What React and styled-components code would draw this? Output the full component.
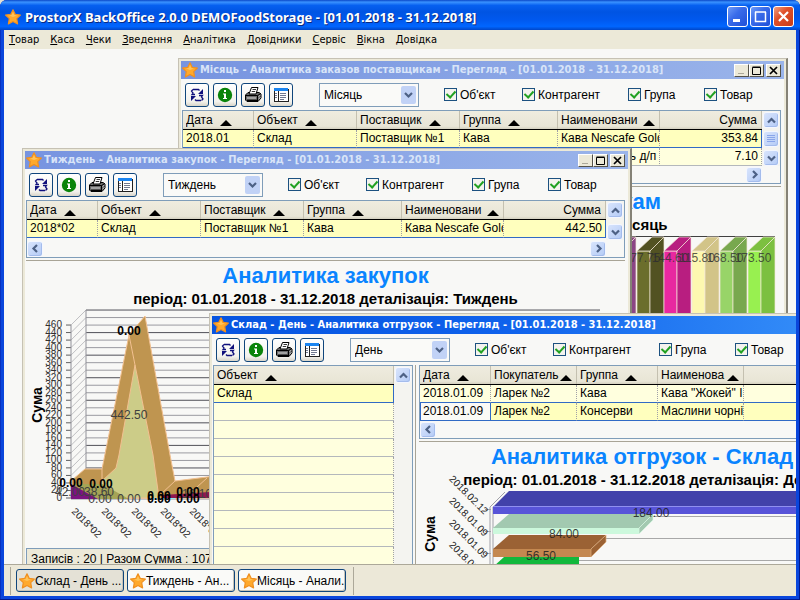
import React from "react";
import styled, { createGlobalStyle, css } from "styled-components";

const uiFont = `"Liberation Sans", Arial, sans-serif`;
const captionFont = `"DejaVu Sans Condensed", "DejaVu Sans", sans-serif`;

const GlobalStyle = createGlobalStyle`
  * {
    box-sizing: border-box;
  }
  body {
    margin: 0;
    background: #e4e0d4;
    color: #000000;
    font-family: ${uiFont};
    font-size: 12px;
  }
  button, select, input {
    font: inherit;
    color: inherit;
    margin: 0;
    padding: 0;
  }
`;

/* ---------- main window ---------- */

const AppFrame = styled.div`
  height: 100vh;
  display: flex;
  flex-direction: column;
  padding: 0 4px 4px;
  overflow: hidden;
  border-radius: 7px 7px 0 0;
  background: #0a46dc;
  box-shadow: inset -1px -1px 0 #001a90, inset 1px 0 0 #0831c0;
`;

const TitleBar = styled.header`
  flex: none;
  height: 30px;
  margin: 0 -4px;
  padding: 3px 6px 0 5px;
  display: flex;
  align-items: center;
  background: linear-gradient(
    #0a48c8 0%,
    #3a92ff 7%,
    #0660f0 18%,
    #0054e3 40%,
    #0058ee 65%,
    #0066ff 88%,
    #0046c8 100%
  );
  h1 {
    flex: 1;
    margin: 0 0 0 4px;
    font-family: "Noto Sans", sans-serif;
    font-size: 13px;
    font-weight: bold;
    line-height: 20px;
    color: #ffffff;
    text-shadow: 1px 1px 0 #0a2a80;
    white-space: nowrap;
  }
`;

const TitleButtons = styled.div`
  display: flex;
  gap: 2px;
`;

const TitleButton = styled.button`
  width: 21px;
  height: 21px;
  border: 1px solid #ffffff;
  border-radius: 3px;
  display: grid;
  place-items: center;
  background: ${(p) =>
    p.$close
      ? "linear-gradient(135deg, #f0a080, #e0502a 40%, #c83c18)"
      : "linear-gradient(135deg, #6f9cf8, #3a6cea 40%, #1f50d8)"};
`;

const MenuBar = styled.nav`
  flex: none;
  height: 19px;
  padding-left: 5px;
  display: flex;
  align-items: center;
  gap: 11px;
  background: #ece9d8;
  a {
    color: #000000;
    text-decoration: none;
    font-family: ${captionFont};
    font-size: 11px;
    line-height: 19px;
  }
`;

const Desktop = styled.main`
  flex: 1;
  min-height: 0;
  position: relative;
  overflow: hidden;
  background: #f8f8f6;
`;

const TaskBar = styled.footer`
  flex: none;
  height: 32px;
  display: flex;
  align-items: center;
  background: #ece8d8;
  border-top: 1px solid #aca899;
`;

const TaskGroup = styled.div`
  height: 28px;
  display: flex;
  align-items: center;
  gap: 3px;
  margin-left: 6px;
  padding: 0 7px 0 5px;
  border-left: 1px solid #aca899;
  border-right: 1px solid #aca899;
`;

const TaskButton = styled.button`
  width: 108px;
  height: 23px;
  padding: 0 1px 0 2px;
  display: flex;
  align-items: center;
  border: 1px solid #10467c;
  border-radius: 3px;
  background: ${(p) => (p.$pressed ? "#e4e1d6" : "#fafaf8")};
  box-shadow: inset -1px -1px 0 #c8c4b8;
  white-space: nowrap;
  svg {
    flex: none;
  }
  span {
    flex: none;
  }
`;

/* ---------- child windows ---------- */

const Window = styled.section`
  position: absolute;
  padding: 2px;
  border: 1px solid #c6c2b4;
  border-right: 2px solid #858276;
  background: #ece9d8;
`;

const Caption = styled.div`
  height: 18px;
  padding: 0 3px 0 1px;
  display: flex;
  align-items: center;
  color: ${(p) => (p.$active ? "#ffffff" : "#d8e4f8")};
  background: ${(p) =>
    p.$active
      ? "linear-gradient(90deg, #0654e0, #0f62ec 45%, #3a94fa)"
      : "linear-gradient(90deg, #7794e0, #9ab4ea)"};
  h2 {
    flex: 1;
    margin: 0 0 0 2px;
    font-family: ${captionFont};
    font-size: 11px;
    line-height: 18px;
    white-space: nowrap;
    overflow: hidden;
  }
`;

const CaptionButton = styled.button`
  width: 15px;
  height: 13px;
  margin-left: ${(p) => (p.$apart ? 2 : 0)}px;
  display: grid;
  place-items: center;
  border: 1px solid;
  border-color: #ffffff #55534a #55534a #ffffff;
  background: #ece9d8;
`;

const Body = styled.div`
  padding: 0 3px 0 1px;
  background: #f8f8f6;
`;

const Toolbar = styled.div`
  height: 31px;
  padding: 0 3px;
  display: flex;
  align-items: center;
`;

const ToolButtons = styled.div`
  display: flex;
  gap: 4px;
`;

const ToolButton = styled.button`
  width: 24px;
  height: 24px;
  display: grid;
  place-items: center;
  border: 1px solid #10467c;
  border-radius: 3px;
  background: linear-gradient(#ffffff, #f2f1ec 80%, #d8d4c8);
`;

const SelectBox = styled.div`
  position: relative;
  width: 100px;
  height: 24px;
  margin: 0 25px 0 26px;
  select {
    appearance: none;
    width: 100%;
    height: 100%;
    padding: 0 20px 0 4px;
    border: 1px solid #7f9db9;
    border-radius: 0;
    background: #fafaf8;
  }
  svg {
    position: absolute;
    top: 3px;
    right: 3px;
    pointer-events: none;
  }
`;

const Checks = styled.div`
  display: grid;
  grid-template-columns: 78px 106px 76px 60px;
`;

const Check = styled.label`
  display: flex;
  align-items: center;
  gap: 3px;
  white-space: nowrap;
  input {
    appearance: none;
    width: 13px;
    height: 13px;
    border: 1px solid #1c5180;
    background: #f4f3ee;
    display: grid;
    place-items: center;
  }
  input:checked::before {
    content: "";
    width: 4px;
    height: 7px;
    margin-top: -2px;
    border: solid #21a121;
    border-width: 0 2px 2px 0;
    transform: rotate(42deg);
  }
`;

const GridPanel = styled.div`
  border: 1px solid #7f9db9;
  background: #f8f8f6;
  overflow: hidden;
`;

const GridArea = styled.div`
  display: flex;
  min-height: 39px;
`;

const Table = styled.table`
  flex: 1;
  width: 0;
  align-self: flex-start;
  table-layout: fixed;
  border-collapse: separate;
  border-spacing: 0;
  th {
    height: 19px;
    padding: 0;
    font-weight: normal;
    text-align: left;
    border-bottom: 1px solid #000000;
    background: linear-gradient(#efecdf, #e8e5d6 85%, #d4d0c0);
  }
`;

const HeadCell = styled.div`
  height: 18px;
  padding: 0 4px 0 3px;
  display: flex;
  justify-content: ${(p) => (p.$right ? "flex-end" : "flex-start")};
  border-right: 1px solid #c4c0b0;
  line-height: 18px;
  white-space: nowrap;
  span {
    overflow: hidden;
    padding-right: ${(p) => (p.$right ? 0 : 7)}px;
  }
  svg {
    flex: none;
    align-self: flex-end;
    margin-bottom: 3px;
  }
`;

const Row = styled.tr`
  td {
    height: 18px;
    padding: 0 3px;
    line-height: 17px;
    white-space: nowrap;
    overflow: hidden;
    background: ${(p) => (p.$current ? "#ffffbe" : "#ffffde")};
    border-right: 1px dotted #a0a0a8;
    border-bottom: 1px solid ${(p) => (p.$blue || p.$current ? "#316ac5" : "#b4b8bc")};
  }
  td:last-child {
    border-right: ${(p) => (p.$current ? "1px solid #316ac5" : "1px dotted #a0a0a8")};
  }
  ${(p) =>
    p.$focus &&
    css`
      td:first-child {
        background: #fafaf6;
        border: 1px solid #316ac5;
        border-top: 0;
        padding-left: 2px;
      }
    `}
`;

const Num = styled.td`
  text-align: right;
`;

const VScroll = styled.div`
  width: 18px;
  padding: 1px 1px 0;
  display: flex;
  flex-direction: column;
  justify-content: ${(p) => (p.$top ? "flex-start" : "space-between")};
  background: #f4f4f0;
`;

const HScroll = styled.div`
  height: 17px;
  padding-right: 18px;
  display: flex;
  align-items: center;
  justify-content: ${(p) => (p.$onlyRight ? "flex-end" : "space-between")};
`;

const ScrollButton = styled.button`
  width: 16px;
  height: 16px;
  display: grid;
  place-items: center;
  border: 1px solid #f4f7ff;
  border-radius: 3px;
  background: linear-gradient(135deg, #d8e4fc, #b4cbf6);
  box-shadow: inset -1px -1px 0 #a4bcec;
`;

const Split = styled.div`
  display: grid;
  grid-template-columns: 200px 1fr;
  gap: 6px;
  background: linear-gradient(#a8a496, #a8a496) 202px 0 / 1px 100% no-repeat;
`;

const ChartPanel = styled.div`
  margin-top: 2px;
  border-top: 1px solid #a8a496;
  padding-top: 3px;
  background: #f8f8f6;
  text-align: center;
  font-weight: bold;
  white-space: nowrap;
  h3 {
    margin: 0;
    font-size: 22px;
    line-height: 24px;
    color: #0a84ff;
  }
  p {
    margin: 0;
    font-size: 15px;
    line-height: 22px;
  }
  svg {
    display: block;
    overflow: visible;
    font-weight: normal;
  }
`;

const StatusLine = styled.div`
  height: 22px;
  padding: 0 4px;
  border: 1px solid #7f9db9;
  background: #ece9d8;
  font-size: 12px;
  line-height: 21px;
`;

/* ---------- icons ---------- */

const Star = () => (
  <svg width="16" height="16" viewBox="0 0 16 16" aria-hidden="true">
    <path
      d="M8 .8 10.2 5.3 15.4 6 11.7 9.6 12.6 14.9 8 12.5 3.4 14.9 4.3 9.6.6 6 5.8 5.3Z"
      fill="#ffa92c"
      stroke="#f09020"
      strokeWidth="1.2"
      strokeLinejoin="round"
    />
    <path d="M8 3 9.3 6 12 6.6 8 8 4 6.6 6.7 6Z" fill="#ffc45a" />
  </svg>
);

const RefreshIcon = () => (
  <svg width="16" height="16" viewBox="0 0 16 16" fill="none" stroke="#10107c">
    <path d="M4 2.500h5.500l1 1M4 2.500 2.500 4l1.500 2-1 1.500 3 0" strokeWidth="1.300" />
    <path d="M12 13.500H7l-1-1M12.500 13.500 14 12l-1.500-2 1-1.500H10" strokeWidth="1.300" />
    <path d="M9 7h5V2ZM7 9H2v5Z" fill="#10107c" stroke="none" />
  </svg>
);

const InfoIcon = () => (
  <svg width="16" height="16" viewBox="0 0 16 16">
    <circle cx="8" cy="8" r="7.200" fill="#0a840a" />
    <path d="M7 3h2v2H7ZM6 6.500h3V11h1v1H6v-1h1V7.500H6Z" fill="#ffffff" />
  </svg>
);

const PrinterIcon = () => (
  <svg width="18" height="18" viewBox="0 0 18 18" stroke="#000000">
    <path d="M1.500 9 4 6.500H15L17 8v4l-3 3.500H3L1.500 14Z" fill="#6a6a6a" />
    <path d="M5 8 7.500 1.500H14L12 8Z" fill="#ffffff" />
    <path d="M8.500 3.500h3.500M7.700 5.500h3.500" strokeWidth=".8" />
    <path d="M1.500 9.500H13.500L17 7.500M13.500 9.500V15" fill="none" />
    <path d="M3 12h9" stroke="#d8d8d8" />
    <path d="M14.500 10.500l2-1.500M14.500 13l2-1.500" stroke="#c0c0c0" />
    <path d="M3 14.500h10" strokeWidth="1.500" />
  </svg>
);

const ListIcon = () => (
  <svg width="16" height="16" viewBox="0 0 16 16" shapeRendering="crispEdges">
    <path d="M1 2h14v12H1Z" fill="#ffffff" stroke="#202020" />
    <path d="M1 1h14v3H1Z" fill="#1a84f0" />
    <path d="M5 4h1v10H5Z" fill="#202020" />
    <path d="M2 6h2v1H2ZM2 8h2v1H2ZM2 10h2v1H2ZM7 6h6v1H7ZM7 8h6v1H7ZM7 10h6v1H7ZM7 12h4v1H7Z" fill="#707890" />
  </svg>
);

const chevrons = {
  up: "M1 6.500 4.500 3l3.500 3.500",
  down: "M1 2.500l3.500 3.500L8 2.500",
  left: "M6 1 2.500 4.500 6 8",
  right: "M3 1l3.500 3.500L3 8",
};

const Chevron = ({ to }) => (
  <svg width="9" height="9" viewBox="0 0 9 9" fill="none">
    <path d={chevrons[to]} stroke="#4d6185" strokeWidth="2.200" />
  </svg>
);

const DropArrow = () => (
  <svg width="15" height="18" viewBox="0 0 15 18">
    <rect width="15" height="18" rx="2" fill="#c1d2f6" />
    <path d="M4 7l3.500 3.500L11 7" fill="none" stroke="#4d6185" strokeWidth="2.200" />
  </svg>
);

const SortArrow = () => (
  <svg width="12" height="6" viewBox="0 0 12 6">
    <path d="M0 6 6 0l6 6Z" />
  </svg>
);

/* ---------- shared parts ---------- */

const ScrollArrow = ({ to, label }) => (
  <ScrollButton type="button" aria-label={label}>
    <Chevron to={to} />
  </ScrollButton>
);

const Tools = ({ id, period }) => (
  <Toolbar>
    <ToolButtons>
      <ToolButton type="button" aria-label="Оновити"><RefreshIcon /></ToolButton>
      <ToolButton type="button" aria-label="Інформація"><InfoIcon /></ToolButton>
      <ToolButton type="button" aria-label="Друк"><PrinterIcon /></ToolButton>
      <ToolButton type="button" aria-label="Список"><ListIcon /></ToolButton>
    </ToolButtons>
    <SelectBox>
      <select id={`${id}-period`} aria-label="Деталізація" defaultValue={period}>
        <option>День</option>
        <option>Тиждень</option>
        <option>Місяць</option>
      </select>
      <DropArrow />
    </SelectBox>
    <Checks>
      {["Об'єкт", "Контрагент", "Група", "Товар"].map((name, i) => (
        <Check key={name} htmlFor={`${id}-check${i}`}>
          <input type="checkbox" id={`${id}-check${i}`} defaultChecked />
          {name}
        </Check>
      ))}
    </Checks>
  </Toolbar>
);

const ChildCaption = ({ title, active }) => (
  <Caption $active={active}>
    <Star />
    <h2>{title}</h2>
    <CaptionButton type="button" aria-label="Згорнути">
      <svg width="9" height="9"><path d="M1 7h6v1H1Z" fill="#aca899" /></svg>
    </CaptionButton>
    <CaptionButton type="button" aria-label="Розгорнути">
      <svg width="9" height="9"><path d="M.5 1.500h8v7h-8ZM.5 1h8" fill="none" stroke="#000000" /></svg>
    </CaptionButton>
    <CaptionButton type="button" aria-label="Закрити" $apart>
      <svg width="9" height="9"><path d="M1 1l7 7M8 1 1 8" stroke="#000000" strokeWidth="1.700" /></svg>
    </CaptionButton>
  </Caption>
);

// columns: [title, width], numeric titles are right aligned without an arrow
const Grid = ({ columns, children }) => (
  <Table>
    <colgroup>
      {columns.map(([title, width], i) => (
        <col key={title + i} width={width} />
      ))}
    </colgroup>
    <thead>
      <tr>
        {columns.map(([title], i) => (
          <th key={title + i}>
            <HeadCell $right={title === "Сумма"}>
              <span>{title}</span>
              {title && title !== "Сумма" && <SortArrow />}
            </HeadCell>
          </th>
        ))}
      </tr>
    </thead>
    <tbody>{children}</tbody>
  </Table>
);

const orderColumns = [
  ["Дата", 71],
  ["Объект", 103],
  ["Поставщик", 103],
  ["Группа", 98],
  ["Наименовани", 102],
  ["Сумма"],
];

/* ---------- charts ---------- */

const bars = [
  ["177.75", 609, "#8b4585", "#8b4585"],
  ["144.60", 637, "#6b6e2c", "#525222"],
  ["115.80", 664, "#e828a0", "#b81e80"],
  ["168.50", 692, "#fdf8b0", "#d2c488"],
  ["173.50", 720, "#98d468", "#78a84e"],
  ["", 748, "#98f050", "#7cc040"],
];

const MonthChart = () => (
  <svg width="600" height="150" viewBox="182 236 600 150">
    <path d="M600 236.500H775" stroke="#404040" />
    {bars.map(([label, x, front, side]) => (
      <g key={x} stroke="#f4e8d8" strokeWidth=".7">
        <path d={`M${x} 251h13v140h-13Z`} fill={front} />
        <path d={`M${x} 251l15-14h12l-14 14Z`} fill={side} />
        <path d={`M${x + 13} 251l14-14v154h-14Z`} fill={side} />
      </g>
    ))}
    <g fill="#303030" fillOpacity=".8" fontSize="12" textAnchor="middle">
      {bars.slice(0, 5).map(([label, x]) => (
        <text key={x} x={x + 33} y="262">{label}</text>
      ))}
    </g>
  </svg>
);

const scale = Array.from({ length: 24 }, (_, i) => i * 20);

const WeekChart = () => (
  <svg width="600" height="238" viewBox="26 310 600 238">
    {scale.map((v) => {
      const y = 498 - v * 0.376;
      return (
        <g key={v}>
          <path d={`M86 ${y - 15}H600`} stroke={v % 60 === 40 ? "#505058" : "#9a9aa0"} />
          <path d={`M71 ${y}l15-15`} stroke="#b0b0b4" strokeWidth=".8" />
          <path d={`M66 ${y}h5`} stroke="#606060" />
          <text x="62" y={y + 3} fontSize="10" textAnchor="end" fill="#303030">{v}</text>
        </g>
      );
    })}
    <path d="M71 325V498M86 310V483M71 499H600" stroke="#909098" fill="none" />
    <g stroke="#f2c090" strokeWidth="1">
      <path
        d="M72 480 85 469H102L129 335 145 316 170 455 175 481 207 477 260 470V498H72Z"
        fill="#bf9550"
      />
      <path d="M102 481 116 468 119 455 135 365 153 455 159 498H102Z" fill="#cccc88" />
      <path d="M129 335 135 365M102 469V481M160 495l15-14M186 497l21-19" fill="none" />
    </g>
    <path d="M72 484h30l27 15H97Z" fill="#a5a456" />
    <path d="M71 484 98 499H71Z" fill="#7b1480" />
    <path d="M162 495 210 492v6H162Z" fill="#901850" />
    <path d="M150 498.500h25" stroke="#90e8f0" />
    <g fontSize="12" textAnchor="middle" fill="#404040">
      <text x="129" y="419">442.50</text>
      <text x="70" y="496">42.00</text>
      <text x="99" y="496">38.60</text>
      <text x="100" y="503">0.00</text>
      <text x="129" y="503">0.00</text>
      <text x="197" y="498">16.10</text>
    </g>
    <g fontSize="12" fontWeight="bold" textAnchor="middle">
      <text x="129" y="335">0.00</text>
      <text x="71" y="487">0.00</text>
      <text x="101" y="488">0.00</text>
      <text x="159" y="500">0.00</text>
      <text x="159" y="503">0.00</text>
      <text x="188" y="496">0.00</text>
      <text x="188" y="503">0.00</text>
    </g>
    <g fontSize="10" fill="#202020">
      {[71, 101, 131, 160, 189].map((x) => (
        <text key={x} transform={`translate(${x} 512) rotate(45)`}>2018*02</text>
      ))}
    </g>
    <text transform="translate(42 405) rotate(-90)" fontSize="14" fontWeight="bold" textAnchor="middle">
      Сума
    </text>
  </svg>
);

const DayChart = () => (
  <svg width="446" height="100" viewBox="419 492 446 100">
    <path d="M509 517.500H860M509 539.500H860M509 561.500H860" stroke="#a8a8a8" />
    <path d="M490 600V508l15-15M493 600V508M485 510.500h6M485 532.500h6M485 554.500h6" stroke="#a0a0a8" fill="none" />
    <path d="M493 508 509 492H860V508Z" fill="#4242aa" />
    <path d="M493 508H860V515H493Z" fill="#5854d8" />
    <path d="M493 507.500H860" stroke="#9090f0" />
    <path d="M493 529 509 515H653L639 529Z" fill="#a2c9b0" />
    <path d="M493 529H639V535H493Z" fill="#ccf8dc" />
    <path d="M639 529 653 515V521L639 535Z" fill="#a2c9b0" stroke="#d8f8e4" strokeWidth=".7" />
    <path d="M493 550 509 536H606L591 550Z" fill="#9b6234" />
    <path d="M493 550H591V558H493Z" fill="#c48850" />
    <path d="M591 550 606 536V543L591 558Z" fill="#9b6234" stroke="#e0b080" strokeWidth=".7" />
    <path d="M493 568 504 558H579V566L570 575H493Z" fill="#12b83c" />
    <g fontSize="12" textAnchor="middle" fill="#202020" fillOpacity=".85">
      <text x="651" y="518">184.00</text>
      <text x="564" y="539">84.00</text>
      <text x="541" y="561">56.50</text>
    </g>
    <g fontSize="10" textAnchor="end" fill="#202020">
      {["2018.02.12", "2018.01.09", "2018.01.09", "2018.01.09"].map((t, i) => (
        <text key={i} transform={`translate(484 ${516 + i * 22}) rotate(45)`}>{t}</text>
      ))}
    </g>
    <text transform="translate(435 535) rotate(-90)" fontSize="14" fontWeight="bold" textAnchor="middle">
      Сума
    </text>
  </svg>
);

/* ---------- the three reports ---------- */

const MonthWindow = styled(Window)`
  left: 174px;
  top: 9px;
  width: 610px;
`;

const WeekWindow = styled(Window)`
  left: 18px;
  top: 99px;
  width: 610px;
`;

const DayWindow = styled(Window)`
  left: 205px;
  top: 264px;
  width: 662px;
`;

const MonthReport = () => (
  <MonthWindow>
    <ChildCaption title="Місяць - Аналитика заказов поставщикам - Перегляд - [01.01.2018 - 31.12.2018]" />
    <Body>
      <Tools id="month" period="Місяць" />
      <GridPanel>
        <GridArea>
          <Grid columns={orderColumns}>
            <Row $current>
              <td>2018.01</td>
              <td>Склад</td>
              <td>Поставщик №1</td>
              <td>Кава</td>
              <td>Кава Nescafe Gold</td>
              <Num>353.84</Num>
            </Row>
            <Row>
              <td>2018.01</td>
              <td>Склад</td>
              <td>Поставщик №1</td>
              <td>Кава</td>
              <td>Кава Капсуль д/п ч</td>
              <Num>7.10</Num>
            </Row>
          </Grid>
          <VScroll>
            <ScrollArrow to="up" label="Вгору" />
            <ScrollButton type="button" aria-label="Повзунок">
              <svg width="8" height="8"><path d="M0 .5h8M0 2.500h8M0 4.500h8M0 6.500h8" stroke="#8aa6ea" /></svg>
            </ScrollButton>
            <ScrollArrow to="down" label="Вниз" />
          </VScroll>
        </GridArea>
        <HScroll $onlyRight>
          <ScrollArrow to="right" label="Праворуч" />
        </HScroll>
      </GridPanel>
      <ChartPanel>
        <h3>Аналитика заказов поставщикам</h3>
        <p>період: 01.01.2018 - 31.12.2018 деталізація: Місяць</p>
        <MonthChart />
      </ChartPanel>
    </Body>
  </MonthWindow>
);

const WeekReport = () => (
  <WeekWindow>
    <ChildCaption title="Тиждень - Аналитика закупок - Перегляд - [01.01.2018 - 31.12.2018]" />
    <Body>
      <Tools id="week" period="Тиждень" />
      <GridPanel>
        <GridArea>
          <Grid columns={orderColumns}>
            <Row $current>
              <td>2018*02</td>
              <td>Склад</td>
              <td>Поставщик №1</td>
              <td>Кава</td>
              <td>Кава Nescafe Gold</td>
              <Num>442.50</Num>
            </Row>
          </Grid>
          <VScroll>
            <ScrollArrow to="up" label="Вгору" />
            <ScrollArrow to="down" label="Вниз" />
          </VScroll>
        </GridArea>
        <HScroll>
          <ScrollArrow to="left" label="Ліворуч" />
          <ScrollArrow to="right" label="Праворуч" />
        </HScroll>
      </GridPanel>
      <ChartPanel>
        <h3>Аналитика закупок</h3>
        <p>період: 01.01.2018 - 31.12.2018 деталізація: Тиждень</p>
        <WeekChart />
      </ChartPanel>
      <StatusLine>Записів : 20 | Разом Сумма : 1073.50</StatusLine>
    </Body>
  </WeekWindow>
);

const DayReport = () => (
  <DayWindow>
    <ChildCaption active title="Склад - День - Аналитика отгрузок - Перегляд - [01.01.2018 - 31.12.2018]" />
    <Body>
      <Tools id="day" period="День" />
      <Split>
        <GridPanel>
          <GridArea>
            <Grid columns={[["Объект"]]}>
              <Row $current>
                <td>Склад</td>
              </Row>
              {Array.from({ length: 11 }, (_, i) => (
                <Row key={i}>
                  <td />
                </Row>
              ))}
            </Grid>
            <VScroll $top>
              <ScrollArrow to="up" label="Вгору" />
            </VScroll>
          </GridArea>
        </GridPanel>
        <div>
          <GridPanel>
            <GridArea>
              <Grid
                columns={[
                  ["Дата", 71],
                  ["Покупатель", 86],
                  ["Группа", 81],
                  ["Наименова", 86],
                  [""],
                ]}
              >
                <Row $blue>
                  <td>2018.01.09</td>
                  <td>Ларек №2</td>
                  <td>Кава</td>
                  <td>Кава "Жокей" І</td>
                  <td />
                </Row>
                <Row $current $focus>
                  <td>2018.01.09</td>
                  <td>Ларек №2</td>
                  <td>Консерви</td>
                  <td>Маслини чорні</td>
                  <td />
                </Row>
              </Grid>
            </GridArea>
            <HScroll>
              <ScrollArrow to="left" label="Ліворуч" />
            </HScroll>
          </GridPanel>
          <ChartPanel>
            <h3>Аналитика отгрузок - Склад</h3>
            <p>період: 01.01.2018 - 31.12.2018 деталізація: День</p>
            <DayChart />
          </ChartPanel>
        </div>
      </Split>
    </Body>
  </DayWindow>
);

const menu = ["Товар", "Каса", "Чеки", "Зведення", "Аналітика", "Довідники", "Сервіс", "Вікна", "Довідка"];

const tasks = ["Склад - День ...", "Тиждень - Ан...", "Місяць - Анали."];

const App = () => {
  return (
    <AppFrame>
      <GlobalStyle />
      <TitleBar>
        <Star />
        <h1>ProstorX BackOffice 2.0.0 DEMOFoodStorage - [01.01.2018 - 31.12.2018]</h1>
        <TitleButtons>
          <TitleButton type="button" aria-label="Згорнути">
            <svg width="15" height="15"><path d="M3 10h7v3H3Z" fill="#ffffff" /></svg>
          </TitleButton>
          <TitleButton type="button" aria-label="Розгорнути">
            <svg width="15" height="15"><path d="M2.500 3v9.500h10V3M2 3h11" fill="none" stroke="#ffffff" strokeWidth="1.500" /></svg>
          </TitleButton>
          <TitleButton type="button" aria-label="Закрити" $close>
            <svg width="15" height="15"><path d="M3 3l9 9M12 3l-9 9" stroke="#ffffff" strokeWidth="2.200" /></svg>
          </TitleButton>
        </TitleButtons>
      </TitleBar>
      <MenuBar>
        {menu.map((item) => (
          <a href="#" key={item}>
            <u>{item[0]}</u>
            {item.slice(1)}
          </a>
        ))}
      </MenuBar>
      <Desktop>
        <MonthReport />
        <WeekReport />
        <DayReport />
      </Desktop>
      <TaskBar>
        <TaskGroup>
          {tasks.map((task, i) => (
            <TaskButton type="button" key={task} $pressed={i === 0}>
              <Star />
              <span>{task}</span>
            </TaskButton>
          ))}
        </TaskGroup>
      </TaskBar>
    </AppFrame>
  );
};

export default App;
